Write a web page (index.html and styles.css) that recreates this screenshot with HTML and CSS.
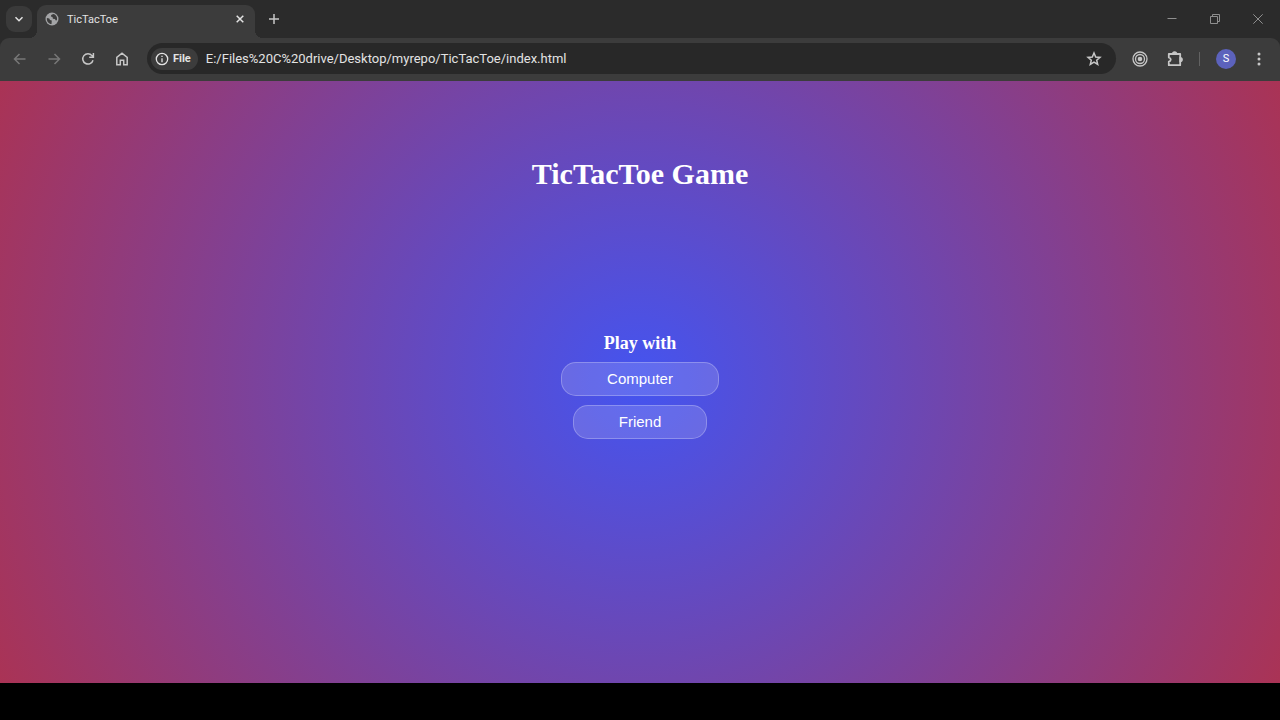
FILE: index.html
```html
<!DOCTYPE html>
<html lang="en">
<head>
<meta charset="utf-8">
<title>TicTacToe</title>
<link rel="stylesheet" href="styles.css">
</head>
<body>
<header class="browser">
  <div class="tab-strip">
    <button class="tab-search" aria-label="Search tabs"><svg width="10" height="10" viewBox="0 0 10 10"><path d="M1.500 3.200 5 6.700l3.500-3.500"/></svg></button>
    <div class="tab">
      <svg class="globe" width="14" height="14" viewBox="0 0 14 14"><circle cx="7" cy="7" r="6.500" fill="#a3a4a6"/><path d="M1.900 6 4.300 6.400 5 8l1.800.5-.3 3.500C3.800 12 1.500 9.500 1.900 6ZM8.300 2 6.200 3l-.3 1.400 1.600.7.400 1.600 2 .3.900 1.600 1.100-.4C12.700 5.300 11 2.600 8.300 2Z" fill="#3c3c3c"/></svg>
      <span class="tab-title">TicTacToe</span>
      <button class="plain tab-close" aria-label="Close tab"><svg width="10" height="10" viewBox="0 0 10 10"><path d="m1.700 1.700 6.600 6.600m0-6.600L1.700 8.300"/></svg></button>
    </div>
    <button class="plain new-tab" aria-label="New tab"><svg width="12" height="12" viewBox="0 0 12 12"><path d="M6 1v10M1 6h10"/></svg></button>
    <div class="window-controls">
      <button class="plain" aria-label="Minimize"><svg width="10" height="10" viewBox="0 0 10 10"><path d="M.5 4.500h9"/></svg></button>
      <button class="plain" aria-label="Restore"><svg width="10" height="10" viewBox="0 0 10 10"><path d="M.5 2.500h7v7h-7zM2.500 2.500v-2h7v7h-2"/></svg></button>
      <button class="plain" aria-label="Close"><svg width="10" height="10" viewBox="0 0 10 10"><path d="m.3.3 9.400 9.400m0-9.400L.3 9.700"/></svg></button>
    </div>
  </div>
  <div class="toolbar">
    <nav class="nav">
      <button class="plain dim" aria-label="Back"><svg width="16" height="16" viewBox="0 0 16 16"><path d="M13.500 8h-11m5-5-5 5 5 5"/></svg></button>
      <button class="plain dim" aria-label="Forward"><svg width="16" height="16" viewBox="0 0 16 16"><path d="M2.500 8h11m-5-5 5 5-5 5"/></svg></button>
      <button class="plain" aria-label="Reload"><svg width="16" height="16" viewBox="0 0 16 16"><path d="M13 9.200A5.200 5.200 0 1 1 12 4.600L13.400 6M13.400 2v4.200H9.200"/></svg></button>
      <button class="plain" aria-label="Home"><svg width="16" height="16" viewBox="0 0 16 16"><path d="M2.800 6.300 8 2.200l5.200 4.100v7.500H9.700V9.200H6.300v4.600H2.800z"/></svg></button>
    </nav>
    <div class="address">
      <button class="file-chip"><svg width="14" height="14" viewBox="0 0 14 14"><circle cx="7" cy="7" r="5.700"/><path d="M7 6.300v3.900M7 3.700v1.400"/></svg>File</button>
      <input class="url" type="text" aria-label="Address" value="E:/Files%20C%20drive/Desktop/myrepo/TicTacToe/index.html">
      <button class="plain" aria-label="Bookmark"><svg width="16" height="16" viewBox="0 0 16 16"><path d="m8 2 1.700 4 4.300.4-3.300 2.800 1 4.200L8 11.200l-3.700 2.200 1-4.200L2 6.400 6.300 6z"/></svg></button>
    </div>
    <div class="tools">
      <button class="plain cast" aria-label="Extension"><svg width="16" height="16" viewBox="0 0 16 16"><circle cx="8" cy="8" r="7"/><circle cx="8" cy="8" r="4.500"/><circle cx="8" cy="8" r="2.300" fill="currentColor" stroke="none"/></svg></button>
      <button class="plain" aria-label="Extensions"><svg width="16" height="16" viewBox="0 0 16 16"><path d="M1.800 3h11.400v11.200H1.800v-3.600c2.600-.4 2.600-3.600 0-4z" stroke-linejoin="round" stroke-width="1.800"/><path d="M5.700 3a1.900 1.900 0 0 1 3.800 0zM13.200 6.700a1.900 1.900 0 0 1 0 3.800z" fill="currentColor"/></svg></button>
      <span class="divider"></span>
      <button class="avatar" aria-label="Profile">S</button>
      <button class="plain more" aria-label="Menu"><svg width="4" height="14" viewBox="0 0 4 14"><g fill="currentColor" stroke="none"><circle cx="2" cy="2" r="1.500"/><circle cx="2" cy="7" r="1.500"/><circle cx="2" cy="12" r="1.500"/></g></svg></button>
    </div>
  </div>
</header>
<main class="game">
  <h1 class="title">TicTacToe Game</h1>
  <section class="menu">
    <h2 class="menu-title">Play with</h2>
    <button class="choice">Computer</button>
    <button class="choice">Friend</button>
  </section>
</main>
<footer class="taskbar"></footer>
</body>
</html>
```
FILE: styles.css
```css
* { box-sizing: border-box; }

body {
  margin: 0;
  min-height: 100vh;
  display: flex;
  flex-direction: column;
  background: #000;
  font-family: Roboto, "Noto Sans", sans-serif;
  color: #fff;
}

button { font: inherit; color: inherit; }

svg {
  display: block;
  flex: none;
  fill: none;
  stroke: currentColor;
  stroke-width: 1.5;
}

.browser { background: #2b2b2b; color: #c7c7c7; }

.tab-strip {
  display: flex;
  align-items: center;
  height: 38px;
  padding: 0 17px 0 6px;
}

.tab-search {
  display: grid;
  place-items: center;
  width: 26px;
  height: 26px;
  padding: 0;
  border: 0;
  border-radius: 9px;
  background: #3a3a3a;
  color: #e3e3e3;
}

.tab {
  position: relative;
  display: flex;
  align-items: center;
  gap: 8px;
  align-self: flex-end;
  width: 218px;
  height: 33px;
  margin-left: 5px;
  padding: 0 10px 5px 8px;
  border-radius: 9px 9px 0 0;
  background: #3c3c3c;
}

.tab::before,
.tab::after {
  content: "";
  position: absolute;
  bottom: 0;
  width: 8px;
  height: 8px;
}

.tab::before {
  left: -8px;
  background: radial-gradient(circle at 0 0, transparent 8px, #3c3c3c 8px);
}

.tab::after {
  right: -8px;
  background: radial-gradient(circle at 100% 0, transparent 8px, #3c3c3c 8px);
}

.globe { stroke: none; }

.tab-title { flex: 1; font-size: 11px; color: #e3e3e3; }

.plain {
  display: grid;
  place-items: center;
  padding: 0;
  border: 0;
  background: none;
}

.tab-close { color: #e3e3e3; }
.new-tab { margin-left: 13px; }

.window-controls {
  display: flex;
  gap: 33px;
  margin-left: auto;
  color: #8f8f8f;
}

.window-controls svg { stroke-width: 1; }

.toolbar {
  display: flex;
  align-items: center;
  height: 43px;
  padding: 0 19px 2px 12px;
  border-radius: 9px 9px 0 0;
  background: #3c3c3c;
}

.nav { display: flex; gap: 18px; margin-right: 17px; }
.dim { color: #777; }

.address {
  flex: 1;
  display: flex;
  align-items: center;
  height: 31px;
  padding: 0 14px 0 4px;
  border-radius: 16px;
  background: #282828;
}

.file-chip {
  display: flex;
  align-items: center;
  gap: 4px;
  height: 22px;
  padding: 0 7px 0 4px;
  border: 0;
  border-radius: 11px;
  background: #3c3c3c;
  font-size: 11px;
  font-weight: 700;
  color: #e3e3e3;
}

.file-chip svg { stroke-width: 1.3; }

.url {
  flex: 1;
  min-width: 0;
  padding: 0 8px;
  border: 0;
  outline: 0;
  background: none;
  font: inherit;
  font-size: 13px;
  color: #e3e3e3;
}

.tools {
  display: flex;
  align-items: center;
  gap: 16px;
  margin-left: 16px;
}

.cast { margin-right: 3px; }
.cast svg { stroke-width: 1.3; }
.more { margin-left: 5px; }

.divider { width: 1px; height: 14px; background: #626262; }

.avatar {
  width: 20px;
  height: 20px;
  padding: 0;
  border: 0;
  border-radius: 50%;
  background: #5c62bc;
  font-size: 11px;
  color: #fff;
}

.game {
  flex: 1;
  display: flex;
  flex-direction: column;
  align-items: center;
  padding-top: 75px;
  background: radial-gradient(circle, #4454f0, #aa3355);
}

.title,
.menu-title {
  margin: 0;
  font-family: "Liberation Serif", serif;
  font-weight: 700;
}

.title { font-size: 30px; line-height: 36px; }

.menu {
  display: flex;
  flex-direction: column;
  align-items: center;
  gap: 9px;
  margin-top: 141px;
}

.menu-title { font-size: 18px; line-height: 20px; }

.choice {
  height: 34px;
  padding: 0 45px 2px;
  border: 1px solid rgba(255, 255, 255, 0.25);
  border-radius: 15px;
  background: rgba(255, 255, 255, 0.15);
  font-family: "Liberation Sans", sans-serif;
  font-size: 15px;
  color: #fff;
}

.taskbar { height: 37px; background: #000; }
```
